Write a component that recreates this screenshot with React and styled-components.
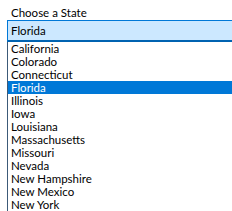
import styled, { createGlobalStyle } from "styled-components";

const GlobalStyle = createGlobalStyle`
  body {
    margin: 0;
    background: #ffffff;
    font-family: Lato, "Noto Sans", sans-serif;
  }
`;

const states = [
  "California",
  "Colorado",
  "Connecticut",
  "Florida",
  "Illinois",
  "Iowa",
  "Louisiana",
  "Massachusetts",
  "Missouri",
  "Nevada",
  "New Hampshire",
  "New Mexico",
  "New York",
];

const Wrap = styled.div`
  width: 232px;
  height: 211px;
  overflow: hidden;
  padding: 5px 0 0 7px;
  box-sizing: border-box;
`;

const Label = styled.div`
  font-size: 11.5px;
  line-height: 15px;
  color: #000;
  padding-left: 4px;
`;

const Combo = styled.div`
  width: 240px;
  height: 19px;
  background: #cce8ff;
  border: 1px solid #0078d7;
  border-bottom: 2px solid #0063b1;
  font-size: 11.5px;
  line-height: 19px;
  color: #000;
  padding-left: 3px;
`;

const List = styled.ul`
  list-style: none;
  margin: 0;
  padding: 0;
  border-left: 1px solid #3c5a78;
  width: 240px;
`;

const Item = styled.li`
  height: 13px;
  line-height: 13px;
  font-size: 11.5px;
  padding-left: 3px;
  color: ${(p) => (p.$active ? "#ffffff" : "#000000")};
  background: ${(p) => (p.$active ? "#0078d7" : "transparent")};
`;

export default function App() {
  return (
    <Wrap>
      <GlobalStyle />
      <Label>Choose a State</Label>
      <Combo>Florida</Combo>
      <List>
        {states.map((s) => (
          <Item key={s} $active={s === "Florida"}>
            {s}
          </Item>
        ))}
      </List>
    </Wrap>
  );
}
